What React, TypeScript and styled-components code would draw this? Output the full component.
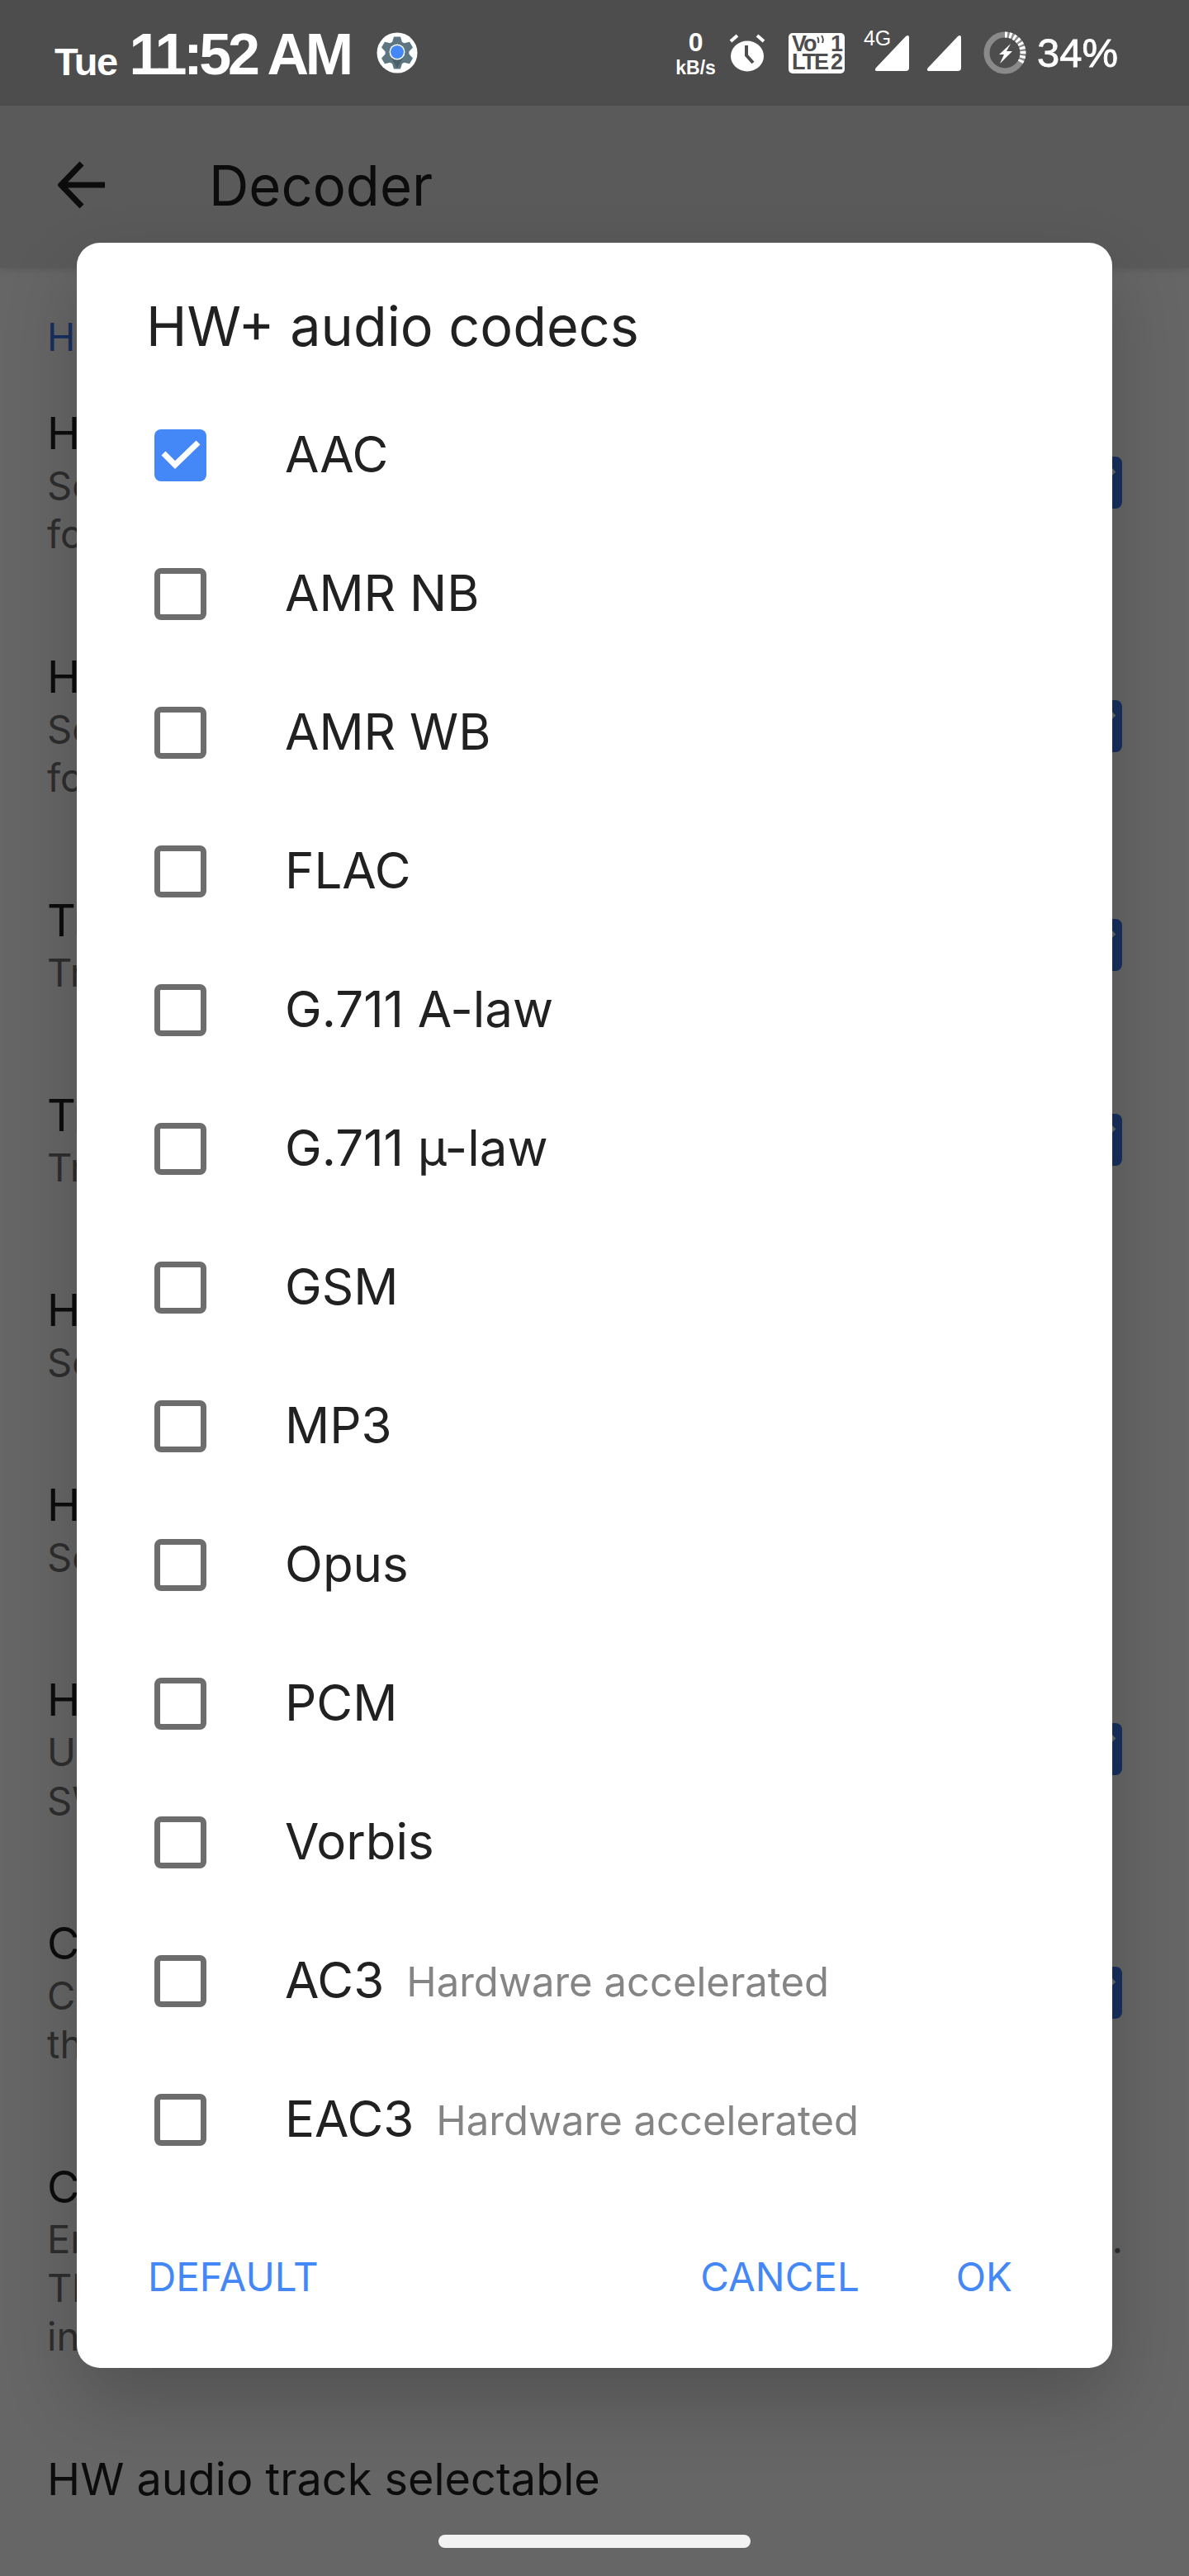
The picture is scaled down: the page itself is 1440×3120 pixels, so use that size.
import React from "react";
import styled, { createGlobalStyle } from "styled-components";

const GlobalStyle = createGlobalStyle`
  html, body { margin: 0; padding: 0; background: #666666; }
  #root { width: 1440px; height: 3120px; }
  * { box-sizing: border-box; }
`;

const FONT = `Inter, "Noto Sans", sans-serif`;
const STATUS_FONT = `"Liberation Sans", Arial, sans-serif`;

const Screen = styled.div`
  position: relative;
  width: 1440px;
  height: 3120px;
  overflow: hidden;
  background: #666666;
  font-family: ${FONT};
`;

const StatusBar = styled.div`
  display: flex;
  align-items: center;
  height: 128px;
  padding: 0 86px 0 66px;
  background: #4d4d4d;
  color: #fff;
  font-family: ${STATUS_FONT};
`;

const Day = styled.span`
  font-size: 47px;
  font-weight: 700;
  letter-spacing: -1.5px;
  margin-top: 20px;
`;

const Clock = styled.span`
  font-size: 70px;
  font-weight: 700;
  letter-spacing: -4.2px;
  margin-left: 15px;
  margin-top: 4px;
`;

const Icon = styled.svg<{ $left?: number }>`
  flex: none;
  margin-left: ${(p) => p.$left ?? 0}px;
`;

const Spacer = styled.div`
  flex: 1;
`;

const Speed = styled.div`
  display: flex;
  flex-direction: column;
  align-items: center;
  font-weight: 700;
  margin-right: 16px;
  line-height: 1;
`;

const SpeedValue = styled.span`
  font-size: 32px;
`;

const SpeedUnit = styled.span`
  font-size: 23px;
  margin-top: 4px;
`;

const VolteBox = styled.div`
  display: grid;
  grid-template-columns: 1fr auto;
  align-items: center;
  width: 68px;
  height: 49px;
  padding: 2px 4px;
  margin-left: 28px;
  border-radius: 5px;
  background: #fff;
  color: #4d4d4d;
  font-size: 27px;
  font-weight: 700;
  line-height: 22px;
  letter-spacing: -2px;
`;

const VolteCell = styled.span`
  display: flex;
  align-items: flex-start;
`;

const NetWrap = styled.div`
  position: relative;
  width: 42px;
  height: 44px;
  margin-left: 36px;
`;

const NetLabel = styled.span`
  position: absolute;
  left: -13px;
  top: -8px;
  font-size: 25px;
  line-height: 25px;
`;

const Battery = styled.span`
  font-size: 49px;
  -webkit-text-stroke: 0.8px #fff;
  margin-left: 13px;
`;

const AppBar = styled.div`
  display: flex;
  align-items: center;
  height: 196px;
  padding: 0 0 4px 70px;
  background: #5a5a5a;
  box-shadow: 0 3px 8px rgba(0, 0, 0, 0.12);
`;

const AppTitle = styled.div`
  margin-left: 125px;
  font-size: 67px;
  color: #0c0c0c;
`;

const Category = styled.div`
  height: 112px;
  padding: 59px 0 0 57px;
  font-size: 46px;
  line-height: 50px;
  color: #17305f;
`;

const Row = styled.div`
  display: flex;
  align-items: center;
  justify-content: space-between;
  padding: 56px 81px 55px 57px;
`;

const RowText = styled.div`
  width: 36px;
  overflow: hidden;
`;

const RowTitle = styled.div`
  font-size: 54px;
  line-height: 66px;
  color: #0c0c0c;
  white-space: nowrap;
`;

const RowLine = styled.div`
  font-size: 47px;
  line-height: 59px;
  color: #2e2e2e;
  white-space: nowrap;
`;

const RowDot = styled(RowLine)`
  align-self: flex-start;
  margin: 66px -1px 0 0;
`;

const BgCheck = styled.div`
  flex: none;
  width: 63px;
  height: 63px;
  border-radius: 8px;
  background: #17305f;
`;

const Dialog = styled.div`
  position: absolute;
  left: 93px;
  top: 294px;
  width: 1254px;
  height: 2574px;
  padding-top: 61px;
  border-radius: 28px;
  background: #fff;
  box-shadow: 0 40px 90px rgba(0, 0, 0, 0.2);
`;

const DialogTitle = styled.div`
  height: 112px;
  padding-left: 84px;
  font-size: 66.5px;
  line-height: 80px;
  color: #212121;
`;

const CodecRow = styled.div`
  display: flex;
  align-items: center;
  height: 168px;
  padding-left: 94px;
`;

const Box = styled.div<{ $checked?: boolean }>`
  flex: none;
  width: 63px;
  height: 63px;
  border-radius: 8px;
  background: ${(p) => (p.$checked ? "#4487f7" : "#fff")};
  border: ${(p) => (p.$checked ? "none" : "7px solid #6d6d6d")};
`;

const CodecName = styled.span`
  margin: -2px 0 0 95px;
  font-size: 60px;
  color: #212121;
`;

const CodecNote = styled.span`
  margin: 2px 0 0 27px;
  font-size: 49px;
  color: #858585;
`;

const Actions = styled.div`
  display: flex;
  align-items: center;
  height: 80px;
  margin-top: 66px;
  padding: 0 121px 0 86px;
`;

const ActionButton = styled.div<{ $gap?: number }>`
  font-size: 47.5px;
  color: #4487f7;
  margin-left: ${(p) => p.$gap ?? 0}px;
`;

const NavPill = styled.div`
  position: absolute;
  left: 531px;
  top: 3070px;
  width: 378px;
  height: 16px;
  border-radius: 8px;
  background: #f2f2f2;
`;

const Tick = ({ color }: { color: string }) => (
  <svg width="63" height="63" viewBox="0 0 63 63">
    <path d="M11 29 L25 43 L53 16" fill="none" stroke={color} strokeWidth="7" />
  </svg>
);

// six toothed gear outline around the middle of a 50x50 box
const gearPath = () => {
  const pts: string[] = [];
  for (let i = 0; i < 6; i++) {
    const a = (i * Math.PI) / 3 - Math.PI / 2;
    for (const [off, r] of [
      [-0.42, 14.5],
      [-0.2, 20],
      [0.2, 20],
      [0.42, 14.5],
    ]) {
      pts.push(`${(25 + r * Math.cos(a + off)).toFixed(1)} ${(25 + r * Math.sin(a + off)).toFixed(1)}`);
    }
  }
  return `M${pts.join(" L")} Z`;
};

const Signal = ({ left }: { left?: number }) => (
  <Icon $left={left} width="42" height="44" viewBox="0 0 42 44">
    <path d="M38 2 Q42 -1 42 4 V40 Q42 44 38 44 H4 Q-1 44 2 40 Z" fill="#fff" />
  </Icon>
);

const rows: { title: string; lines: string[]; check?: boolean; dot?: boolean }[] = [
  { title: "H", lines: ["Se", "fo"], check: true },
  { title: "H", lines: ["Se", "fo"], check: true },
  { title: "Tr", lines: ["Tr"], check: true },
  { title: "Tr", lines: ["Tr"], check: true },
  { title: "H", lines: ["Se"] },
  { title: "H", lines: ["Se"] },
  { title: "H", lines: ["Us", "SW"], check: true },
  { title: "C", lines: ["Ca", "th"], check: true },
  { title: "C", lines: ["En", "Th", "in"], dot: true },
];

const codecs: { name: string; note?: string; checked?: boolean }[] = [
  { name: "AAC", checked: true },
  { name: "AMR NB" },
  { name: "AMR WB" },
  { name: "FLAC" },
  { name: "G.711 A-law" },
  { name: "G.711 µ-law" },
  { name: "GSM" },
  { name: "MP3" },
  { name: "Opus" },
  { name: "PCM" },
  { name: "Vorbis" },
  { name: "AC3", note: "Hardware accelerated" },
  { name: "EAC3", note: "Hardware accelerated" },
];

export default function App() {
  return (
    <Screen>
      <GlobalStyle />
      <StatusBar>
        <Day>Tue</Day>
        <Clock>11:52 AM</Clock>
        <Icon $left={32} width="50" height="50" viewBox="0 0 50 50">
          <circle cx="25" cy="25" r="24.5" fill="#fff" />
          <path d={gearPath()} fill="#5d7682" />
          <path d="M15 25 L25 44 L35 25 Z" fill="#4a5f69" />
          <circle cx="25" cy="24" r="9.5" fill="#fff" />
          <circle cx="25" cy="24" r="8" fill="#4487f7" />
        </Icon>
        <Spacer />
        <Speed>
          <SpeedValue>0</SpeedValue>
          <SpeedUnit>kB/s</SpeedUnit>
        </Speed>
        <Icon width="44" height="46" viewBox="0 0 44 46">
          <path d="M2 9 L10 2 M42 9 L34 2" stroke="#fff" strokeWidth="4" />
          <ellipse cx="22" cy="27" rx="20" ry="18.5" fill="#fff" />
          <path d="M21 14 V26 L29 35" fill="none" stroke="#4d4d4d" strokeWidth="4" />
        </Icon>
        <VolteBox>
          <VolteCell>
            Vo
            <Icon $left={2} width="10" height="12" viewBox="0 0 10 12">
              <path d="M1 3 Q3 6 2 10 M6 1 Q9 5 7 10" fill="none" stroke="#4d4d4d" strokeWidth="2" />
            </Icon>
          </VolteCell>
          <span>1</span>
          <span>LTE</span>
          <span>2</span>
        </VolteBox>
        <NetWrap>
          <NetLabel>4G</NetLabel>
          <Signal />
        </NetWrap>
        <Signal left={21} />
        <Icon $left={27} width="52" height="52" viewBox="0 0 52 52">
          <circle cx="26" cy="26" r="22" fill="none" stroke="#8a8a8a" strokeWidth="7" />
          <path
            d="M26 4 A22 22 0 0 1 44.6 37.7"
            fill="none"
            stroke="#fff"
            strokeWidth="7"
            strokeDasharray="3 2.4"
          />
          <path d="M33 15 L19 28 H25 L20 39 L35 24 H28 Z" fill="#fff" />
        </Icon>
        <Battery>34%</Battery>
      </StatusBar>
      <AppBar>
        <svg width="58" height="58" viewBox="0 0 58 58">
          <path d="M29 3 L4 29 L29 55 M4 29 H57" fill="none" stroke="#0c0c0c" strokeWidth="7" />
        </svg>
        <AppTitle>Decoder</AppTitle>
      </AppBar>
      <Category>H</Category>
      {rows.map((r, i) => (
        <Row key={i}>
          <RowText>
            <RowTitle>{r.title}</RowTitle>
            {r.lines.map((l, j) => (
              <RowLine key={j}>{l}</RowLine>
            ))}
          </RowText>
          {r.check && (
            <BgCheck>
              <Tick color="#666666" />
            </BgCheck>
          )}
          {r.dot && <RowDot>.</RowDot>}
        </Row>
      ))}
      <Row>
        <RowTitle>HW audio track selectable</RowTitle>
      </Row>
      <Dialog>
        <DialogTitle>HW+ audio codecs</DialogTitle>
        {codecs.map((c) => (
          <CodecRow key={c.name}>
            <Box $checked={c.checked}>{c.checked && <Tick color="#ffffff" />}</Box>
            <CodecName>{c.name}</CodecName>
            {c.note && <CodecNote>{c.note}</CodecNote>}
          </CodecRow>
        ))}
        <Actions>
          <ActionButton>DEFAULT</ActionButton>
          <Spacer />
          <ActionButton>CANCEL</ActionButton>
          <ActionButton $gap={117}>OK</ActionButton>
        </Actions>
      </Dialog>
      <NavPill />
    </Screen>
  );
}
